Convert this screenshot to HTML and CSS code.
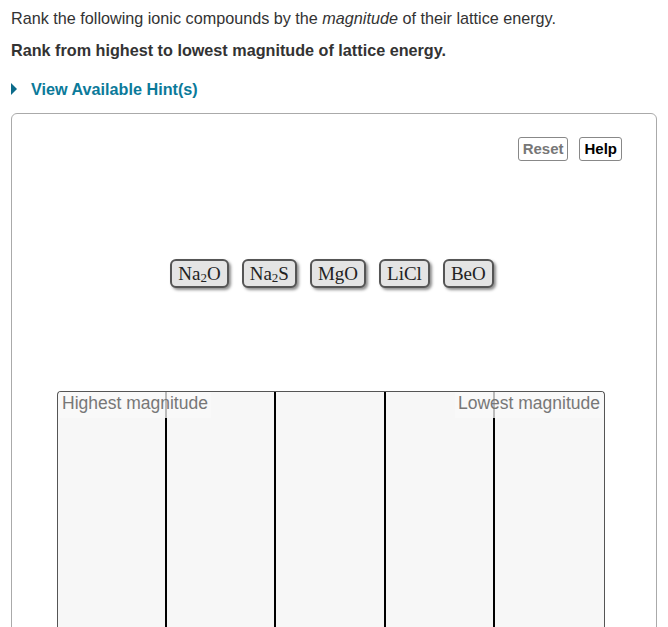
FILE: index.html
```html
<!DOCTYPE html>
<html>
<head>
<meta charset="utf-8">
<link rel="stylesheet" href="styles.css">
</head>
<body>
<div class="page">
  <p class="q">Rank the following ionic compounds by the <em>magnitude</em> of their lattice energy.</p>
  <p class="q strong">Rank from highest to lowest magnitude of lattice energy.</p>
  <div class="hint"><span class="tri"></span><span class="hint-text">View Available Hint(s)</span></div>
  <div class="panel">
    <div class="tools">
      <button class="btn reset">Reset</button>
      <button class="btn help">Help</button>
    </div>
    <div class="tiles">
      <span class="tile">Na<sub>2</sub>O</span>
      <span class="tile">Na<sub>2</sub>S</span>
      <span class="tile">MgO</span>
      <span class="tile">LiCl</span>
      <span class="tile">BeO</span>
    </div>
    <div class="rank">
      <div class="col"></div>
      <div class="col"></div>
      <div class="col"></div>
      <div class="col"></div>
      <div class="col last"></div>
      <span class="lbl lbl-hi">Highest magnitude</span>
      <span class="lbl lbl-lo">Lowest magnitude</span>
    </div>
  </div>
</div>
</body>
</html>
```
FILE: styles.css
```css
html, body {
  margin: 0;
  padding: 0;
  background: #fff;
  overflow: hidden;
}
.page {
  font-family: "Liberation Sans", Arial, sans-serif;
  color: #333;
  padding: 9px 11px 0 11px;
  width: 646px;
}
.q {
  margin: 0 0 13px 0;
  font-size: 16.2px;
  line-height: 19px;
}
.strong {
  font-weight: bold;
  margin-bottom: 19px;
}
.hint {
  display: flex;
  align-items: center;
  height: 20px;
  margin-bottom: 14px;
}
.tri {
  width: 0;
  height: 0;
  border-top: 6px solid transparent;
  border-bottom: 6px solid transparent;
  border-left: 6px solid #0b6b8a;
  margin-right: 14px;
}
.hint-text {
  color: #0b7a9a;
  font-weight: bold;
  font-size: 16.2px;
}
.panel {
  border: 1px solid #aaa;
  border-radius: 6px;
  height: 560px;
  box-sizing: border-box;
  position: relative;
}
.tools {
  display: flex;
  justify-content: flex-end;
  gap: 11px;
  padding: 23px 34px 0 0;
}
.btn {
  font-family: "Liberation Sans", Arial, sans-serif;
  font-weight: bold;
  font-size: 15px;
  height: 24px;
  padding: 0 4px;
  background: #fff;
  border: 1px solid #888;
  border-radius: 3px;
  line-height: 20px;
}
.reset { color: #777; }
.help { color: #000; }
.tiles {
  display: flex;
  justify-content: center;
  gap: 13px;
  margin-top: 98px;
  padding-right: 4px;
}
.tile {
  font-family: "Liberation Serif", "DejaVu Serif", serif;
  font-size: 19px;
  color: #222;
  background: #e4e4e4;
  border: 2px solid #555;
  border-radius: 6px;
  height: 29px;
  box-sizing: border-box;
  padding: 0 6px;
  line-height: 25px;
  box-shadow: 2px 2px 3px rgba(0,0,0,0.45);
}
.tile sub {
  font-size: 13px;
  vertical-align: -2px;
  line-height: 0;
}
.rank {
  position: relative;
  margin: 103px 0 0 45px;
  width: 548px;
  height: 260px;
  border: 1px solid #555;
  border-bottom: none;
  border-radius: 4px 4px 0 0;
  background: #f7f7f7;
  display: grid;
  grid-template-columns: repeat(5, 1fr);
  box-sizing: border-box;
}
.col {
  border-right: 2px solid #000;
}
.col.last {
  border-right: none;
}
.lbl {
  position: absolute;
  top: 0;
  font-size: 17.5px;
  line-height: 22px;
  color: #777;
  background: rgba(250, 250, 250, 0.75);
  padding: 0 3px 4px 3px;
}
.lbl-hi { left: 1px; }
.lbl-lo { right: 1px; }
```
